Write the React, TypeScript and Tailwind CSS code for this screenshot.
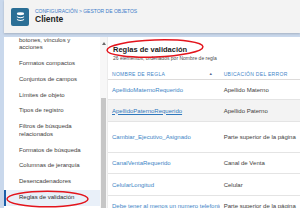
import React from 'react'

// ── Sidebar entries (object manager sections) ──
const sections: { label: string[]; active?: boolean }[] = [
  { label: ['botones, vínculos y', 'acciones'] },
  { label: ['Formatos compactos'] },
  { label: ['Conjuntos de campos'] },
  { label: ['Límites de objeto'] },
  { label: ['Tipos de registro'] },
  { label: ['Filtros de búsqueda', 'relacionados'] },
  { label: ['Formatos de búsqueda'] },
  { label: ['Columnas de jerarquía'] },
  { label: ['Desencadenadores'] },
  { label: ['Reglas de validación'], active: true },
]

// ── Validation rules table rows ──
const rules: { name: string; location: string; h: string; hover?: boolean }[] = [
  { name: 'ApellidoMaternoRequerido', location: 'Apellido Materno', h: 'h-[20px]' },
  { name: 'ApellidoPaternoRequerido', location: 'Apellido Paterno', h: 'h-[22px]', hover: true },
  { name: 'Cambiar_Ejecutivo_Asignado', location: 'Parte superior de la página', h: 'h-[31px]' },
  { name: 'CanalVentaRequerido', location: 'Canal de Venta', h: 'h-[21px]' },
  { name: 'CelularLongitud', location: 'Celular', h: 'h-[22px]' },
  { name: 'Debe tener al menos un numero telefonico', location: 'Parte superior de la página', h: 'h-[21px]' },
]

function ObjectIcon() {
  return (
    <div className="w-[18px] h-[18px] rounded-[2px] bg-[#2b6f96] flex items-center justify-center shrink-0">
      <svg width="9" height="9" viewBox="0 0 10 10" fill="#fff">
        <ellipse cx="5" cy="2" rx="4" ry="1.6" />
        <path d="M1 4.2c0 .9 1.8 1.6 4 1.6s4-.7 4-1.6v1.2c0 .9-1.8 1.6-4 1.6s-4-.7-4-1.6z" />
        <path d="M1 7.2c0 .9 1.8 1.6 4 1.6s4-.7 4-1.6v1.2c0 .9-1.8 1.6-4 1.6s-4-.7-4-1.6z" />
      </svg>
    </div>
  )
}

function Header() {
  return (
    <div className="ml-[4px] h-[33px] bg-[#f3f3f3] shadow-[0_1px_2px_rgba(0,0,0,0.18)] flex items-center pl-[7px] gap-[6px]">
      <ObjectIcon />
      <div className="flex flex-col">
        <span className="text-[5px] leading-[6px] text-[#3d7cc9] uppercase">
          Configuración &gt; Gestor de objetos
        </span>
        <span className="text-[8.5px] leading-[11px] font-bold text-[#1e1e1e]">Cliente</span>
      </div>
    </div>
  )
}

function Sidebar() {
  return (
    <div className="w-[96px] h-full overflow-hidden">
      <ul className="-mt-[4.4px]">
        {sections.map((s) => (
          <li
            key={s.label.join(' ')}
            className={
              s.active
                ? 'py-[4px] pl-[13px] border-l-[2px] border-[#1b5ea8] bg-[#e9f0f9] text-[6px] leading-[7.75px] text-[#2b2b2b]'
                : 'py-[4px] pl-[15px] text-[6px] leading-[7.75px] text-[#3e3e3c]'
            }
          >
            {s.label.map((line) => (
              <div key={line}>{line}</div>
            ))}
          </li>
        ))}
      </ul>
    </div>
  )
}

function Scrollbar() {
  return (
    <div className="w-[7px] h-full bg-[#f7f7f7] flex flex-col items-center">
      <svg width="4" height="3" viewBox="0 0 4 3" className="mt-[4.5px]">
        <path d="M2 0L4 3H0z" fill="#6b6b6b" />
      </svg>
      <div className="mt-[53px] w-[5px] flex-1 bg-[#c6c6c6]" />
    </div>
  )
}

function RulesPanel() {
  return (
    <div className="flex-1 h-full overflow-hidden border-l border-[#ececec]">
      <div className="pl-[5px] pt-[8px]">
        <div className="text-[7.5px] leading-[10px] font-bold text-[#1b1b1b]">Reglas de validación</div>
        <div className="text-[5px] leading-[7px] text-[#4a4a4a]">
          26 elementos, ordenados por Nombre de regla
        </div>
      </div>

      <div className="flex h-[18px] border-b border-[#dddbda] items-end pb-[2.5px] text-[5px] leading-[6px] tracking-[0.3px] text-[#3f85c8] uppercase">
        <div className="w-[112px] pl-[4px] pr-[7px] flex justify-between items-center">
          <span>Nombre de regla</span>
          <span className="text-[4px] text-[#54698d]">▲</span>
        </div>
        <div className="pl-[3.7px]">Ubicación del error</div>
      </div>

      {rules.map((r) => (
        <div
          key={r.name}
          className={`flex items-center border-b border-[#e4e4e4] text-[6px] leading-[8px] ${r.h} ${
            r.hover ? 'bg-[#f3f3f3]' : ''
          }`}
        >
          <div className="w-[112px] pl-[4px] pr-[1px] overflow-hidden whitespace-nowrap">
            <span className={r.hover ? 'text-[#2f78bd] underline' : 'text-[#3d86c6]'}>{r.name}</span>
          </div>
          <div className="pl-[3.7px] whitespace-nowrap text-[#3e3e3c]">{r.location}</div>
        </div>
      ))}
    </div>
  )
}

// ── Red hand-drawn annotation rings on top of the screenshot ──
function Annotations() {
  return (
    <svg className="absolute inset-0 pointer-events-none" width="300" height="208" viewBox="0 0 300 208">
      <ellipse cx="155" cy="48.5" rx="48" ry="8.5" fill="none" stroke="#e3141c" strokeWidth="1.5" transform="rotate(-2 155 48.5)" />
      <ellipse cx="47.5" cy="199" rx="40.5" ry="7.8" fill="none" stroke="#e3141c" strokeWidth="1.5" />
    </svg>
  )
}

export default function App() {
  return (
    <div className="relative w-[300px] h-[208px] overflow-hidden bg-[#c9d8ec] font-['Liberation_Sans',Arial,sans-serif]">
      <Header />
      <div className="ml-[4px] mt-[4px] h-[171px] flex bg-white">
        <Sidebar />
        <Scrollbar />
        <RulesPanel />
      </div>
      <Annotations />
    </div>
  )
}
